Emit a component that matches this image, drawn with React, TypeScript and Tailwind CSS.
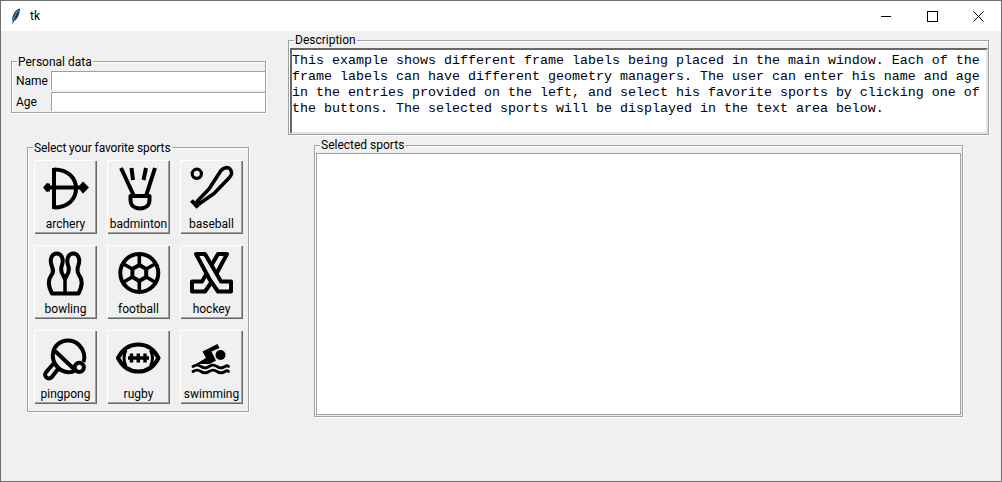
import { ReactNode } from "react";

const ui = "font-['Roboto',sans-serif] text-[12px] leading-4 text-black";
const frame =
  "border border-[#a0a0a0] shadow-[1px_1px_0_#ffffff,inset_1px_1px_0_#ffffff]";

function Icon({ children }: { children: ReactNode }) {
  return (
    <svg
      viewBox="0 0 48 48"
      width="48"
      height="48"
      fill="none"
      stroke="#000"
      strokeWidth="4"
      strokeLinejoin="round"
    >
      {children}
    </svg>
  );
}

const Archery = () => (
  <Icon>
    <path d="M12 5V46" />
    <path d="M12 6.5C26 6.5 34 15 34 25.5C34 36 26 44.5 12 44.5" />
    <path d="M4 24.5H42" />
    <path d="M2 24.5L5 21V28Z M46 24.5L41 19.5L37 24.5L41 29.5Z" fill="#000" strokeWidth="1.5" />
    <path d="M6 20.5V28.5" />
  </Icon>
);

const Badminton = () => (
  <Icon>
    <path d="M6 5L19 33M40 5L31 33M16.5 5L18 17M31 5L28.5 17" />
    <path d="M15.5 33H34.5V37C34.5 42.5 30.5 45.5 25 45.5C19.5 45.5 15.5 42.5 15.5 37Z" />
  </Icon>
);

const Baseball = () => (
  <Icon>
    <circle cx="8.8" cy="10.8" r="4.6" strokeWidth="3.2" />
    <path d="M9 38.5L21 26L33 7.5C36 4 40 4 42 6C44.5 8.5 44 12 41 15L26 30.5L11 41Z" strokeWidth="3.6" />
    <path d="M3.5 37.5L10 44.5" />
  </Icon>
);

const Bowling = () => (
  <Icon>
    <path d="M10 45.5C6 38 5.5 32 9.5 27C12 24 11 21 9.5 17C7.5 11 10 5.5 14.7 5.5C19.5 5.5 22 11 20 17C18.5 21 19 24 21 27L23 31L25 27C27 24 27.5 21 26 17C24 11 26.5 5.5 31.3 5.5C36 5.5 38.5 11 36.5 17C35 21 35 24 37 27C41 32 40.5 38 36.5 45.5Z" />
    <path d="M23 31V45" strokeWidth="3.5" />
  </Icon>
);

const Football = () => (
  <Icon>
    <circle cx="24.3" cy="25" r="19" />
    <path d="M24.3 17L31.2 21V29L24.3 33L17.4 29V21Z" />
    <path d="M24.3 17V7M31.2 21L40 16M31.2 29L40 34M24.3 33V43M17.4 29L8.6 34M17.4 21L8.6 16" strokeWidth="3.6" />
  </Icon>
);

const Hockey = () => (
  <Icon>
    <path d="M39 6L30 6L14 33.5H4V43.5H17L25 32Z" fill="#f0f0f0" />
    <path d="M8 6L17 6L33 33.5H43V43.5H30L22 32Z" fill="#f0f0f0" />
  </Icon>
);

const Pingpong = () => (
  <Icon>
    <path d="M33.5 37.5C27 41 19 39 14.5 33C9 26 10 17 15 12C21 6 31 6 37 12C42 17 43.5 24 41.5 29" />
    <path d="M13 18L33 37" />
    <path d="M17.5 34L9.5 44.5C7 46.5 3.5 45 3 42C3 40 4 39 5.5 37.5L13 29" />
    <circle cx="37.3" cy="34.3" r="4.6" />
  </Icon>
);

const Rugby = () => (
  <Icon>
    <path d="M3 25C8 15 15 11.5 23.3 11.5C31.5 11.5 38.5 15 43.5 25C38.5 35 31.5 38.5 23.3 38.5C15 38.5 8 35 3 25Z" />
    <path d="M11 17C8.5 22 8.5 28 11 33M35.5 17C38 22 38 28 35.5 33" strokeWidth="3" />
    <path d="M13 25H34M16.5 20.5V29.5M23.3 20.5V29.5M30 20.5V29.5" strokeWidth="3.5" />
  </Icon>
);

const Swimming = () => (
  <Icon>
    <circle cx="32.5" cy="22" r="5" fill="#000" stroke="none" />
    <path d="M29.5 11L31.5 15L23.5 18.5L28 27.5L22 31L8 31L18 25L14.5 18.5Z" fill="#000" stroke="none" />
    <path
      d="M5 33.5C8 31.5 10 31.5 13 33.5C16 35.5 18 35.5 21 33.5C24 31.5 26 31.5 29 33.5C32 35.5 34 35.5 37 33.5C38.5 32.5 39.5 32.5 40.5 33.5M5 38.5C8 36.5 10 36.5 13 38.5C16 40.5 18 40.5 21 38.5C24 36.5 26 36.5 29 38.5C32 40.5 34 40.5 37 38.5C38.5 37.5 39.5 37.5 40.5 38.5"
      strokeWidth="2.8"
      strokeLinecap="round"
    />
  </Icon>
);

const sports = [
  { name: "archery", icon: <Archery /> },
  { name: "badminton", icon: <Badminton /> },
  { name: "baseball", icon: <Baseball /> },
  { name: "bowling", icon: <Bowling /> },
  { name: "football", icon: <Football /> },
  { name: "hockey", icon: <Hockey /> },
  { name: "pingpong", icon: <Pingpong /> },
  { name: "rugby", icon: <Rugby /> },
  { name: "swimming", icon: <Swimming /> },
];

const description = [
  "This example shows different frame labels being placed in the main window. Each of the",
  "frame labels can have different geometry managers. The user can enter his name and age",
  "in the entries provided on the left, and select his favorite sports by clicking one of",
  "the buttons. The selected sports will be displayed in the text area below.",
];

function Entry({ label }: { label: string }) {
  return (
    <div className="flex h-[21px] items-center">
      <span className="w-[39px] pl-[4px]">{label}</span>
      <div className="h-[19px] w-[214px] border-t border-l border-[#a0a0a0] bg-white" />
    </div>
  );
}

export default function App() {
  return (
    <div
      className={`flex h-[482px] w-[1002px] flex-col overflow-hidden border border-[#6e6e6e] bg-[#f0f0f0] ${ui}`}
    >
      <div className="flex h-[30px] shrink-0 items-center bg-white">
        <svg viewBox="0 0 10 16" width="10" height="16" className="ml-[10px]">
          <path d="M8.5 0.5C5 1.5 2.5 5 1.5 9C1 11 1.2 12.5 1.8 13L1 15.5L2 15.5L3 13C6 12 8.5 7 9 1Z" fill="#1f3d63" />
          <path d="M7.5 2C5.5 4 3.5 7.5 2.5 12" stroke="#8fb4dc" strokeWidth="0.8" fill="none" />
        </svg>
        <span className="ml-[9px] grow">tk</span>
        <div className="flex h-full">
          <div className="flex w-[46px] items-center justify-center">
            <div className="h-px w-[10px] bg-black" />
          </div>
          <div className="flex w-[46px] items-center justify-center">
            <div className="h-[11px] w-[11px] border border-black" />
          </div>
          <div className="flex w-[46px] items-center justify-center">
            <svg viewBox="0 0 11 11" width="11" height="11" stroke="#000" strokeWidth="1">
              <path d="M0.5 0.5L10.5 10.5M10.5 0.5L0.5 10.5" />
            </svg>
          </div>
        </div>
      </div>

      <div className="flex grow">
        <div className="flex w-[287px] shrink-0 flex-col">
          <fieldset className={`ml-[10px] mt-[22px] h-[60px] w-[255px] ${frame}`}>
            <legend className="ml-[5px] translate-y-px px-px">Personal data</legend>
            <div className="pt-[1px]">
              <Entry label="Name" />
              <Entry label="Age" />
            </div>
          </fieldset>

          <fieldset className={`ml-[26px] mt-[26px] h-[273px] w-[222px] ${frame}`}>
            <legend className="ml-[5px] translate-y-px px-px tracking-[-0.12px]">
              Select your favorite sports
            </legend>
            <div className="grid grid-cols-[63px_63px_63px] gap-x-[10px] gap-y-[11px] pl-[6px] pt-[5px]">
              {sports.map((s) => (
                <button
                  key={s.name}
                  type="button"
                  className="flex h-[74px] w-[63px] flex-col items-center pt-[3px] shadow-[inset_1px_1px_0_#ffffff,inset_-1px_-1px_0_#696969,inset_-2px_-2px_0_#a0a0a0]"
                >
                  {s.icon}
                  <span className="mt-[5px] whitespace-nowrap">{s.name}</span>
                </button>
              ))}
            </div>
          </fieldset>
        </div>

        <div className="flex flex-col">
          <fieldset className={`mt-px h-[103px] w-[701px] ${frame}`}>
            <legend className="ml-[5px] px-px">Description</legend>
            <div className="ml-px h-[86px] w-[698px] border-t-2 border-r-2 border-b-2 border-l-2 border-t-[#696969] border-r-[#e3e3e3] border-b-[#e3e3e3] border-l-[#696969] bg-white pt-[3px] font-['Liberation_Mono',monospace] text-[13.33px] leading-4 whitespace-pre">
              {description.map((line) => (
                <div key={line}>{line}</div>
              ))}
            </div>
          </fieldset>

          <fieldset className={`ml-[26px] mt-[2px] h-[280px] w-[649px] ${frame}`}>
            <legend className="ml-[5px] px-px">Selected sports</legend>
            <div className="ml-px h-[262px] w-[645px] border border-[#a0a0a0] bg-white" />
          </fieldset>
        </div>
      </div>
    </div>
  );
}
